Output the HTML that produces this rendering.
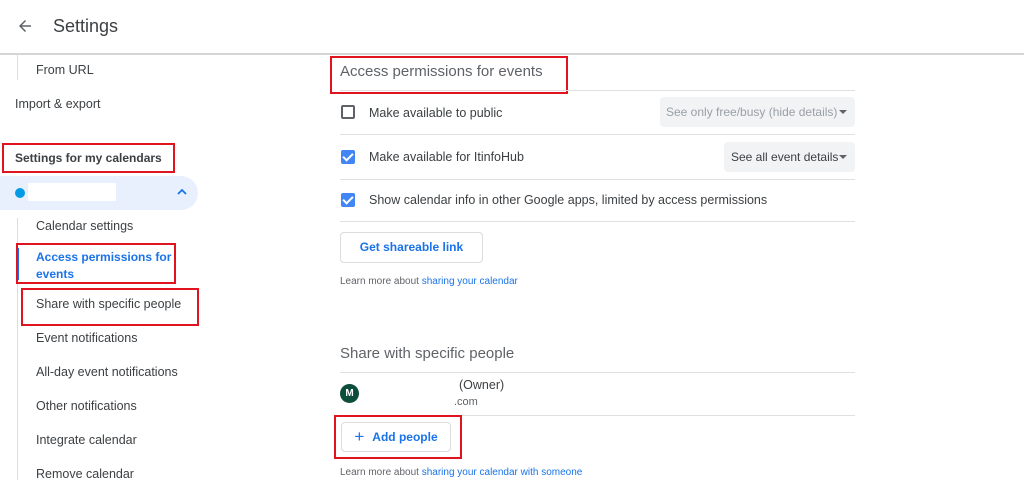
<!DOCTYPE html>
<html><head><style>
body{margin:0;width:1024px;height:497px;background:#fff;font-family:"Liberation Sans",Arial,sans-serif;position:relative;overflow:hidden;color:#3c4043}
.a{position:absolute;white-space:nowrap}
.t{font-size:12.5px;color:#3c4043}
.red{position:absolute;border:2px solid #e0141e;box-sizing:border-box}
.hr{position:absolute;left:340px;width:515px;height:1px;background:#e0e0e0}
.cb{position:absolute;left:341px;width:14px;height:14px;border-radius:2px;box-sizing:border-box}
.on{background:#4285f4}
.on:after{content:"";position:absolute;left:4px;top:1px;width:4px;height:8px;border:solid #fff;border-width:0 2px 2px 0;transform:rotate(45deg)}
.off{border:2px solid #5f6368}
.dd{position:absolute;background:#f1f3f4;border-radius:4px;font-size:12px}
.dd:after{content:"";position:absolute;right:8px;top:13px;border:4px solid transparent;border-top-color:#5f6368;border-bottom:0}
.btn{position:absolute;border:1px solid #dadce0;border-radius:4px;color:#1a73e8;font-size:12px;font-weight:bold;box-sizing:border-box;text-align:center}
.lm{font-size:10px;color:#5f6368}
.lm span{color:#1a73e8}
</style></head><body>
<svg class="a" style="left:16px;top:17px" width="18" height="18" viewBox="0 0 24 24"><path d="M20 11H7.8l5.6-5.6L12 4l-8 8 8 8 1.4-1.4L7.8 13H20z" fill="#5f6368"/></svg>
<div class="a" style="left:53px;top:16px;font-size:18px;color:#3c4043">Settings</div>
<div class="a" style="left:0;top:53px;width:1024px;height:2px;background:#d5d5d5"></div>
<div class="a" style="left:17px;top:55px;width:1px;height:25px;background:#ddd"></div>
<div class="a" style="left:17px;top:218px;width:1px;height:262px;background:#ddd"></div>
<div class="a" style="left:17px;top:248px;width:2px;height:32px;background:#1a73e8"></div>
<div class="a t" style="left:36px;top:63px">From URL</div>
<div class="a t" style="left:15px;top:97px">Import &amp; export</div>
<div class="a" style="left:15px;top:151px;font-size:12px;font-weight:bold;color:#3c4043">Settings for my calendars</div>
<div class="red" style="left:2px;top:143px;width:173px;height:30px"></div>
<div class="a" style="left:0;top:176px;width:198px;height:34px;background:#e8f0fe;border-radius:0 17px 17px 0"></div>
<div class="a" style="left:15px;top:188px;width:10px;height:10px;border-radius:50%;background:#039be5"></div>
<div class="a" style="left:28px;top:183px;width:88px;height:18px;background:#fff"></div>
<svg class="a" style="left:176px;top:187px" width="12" height="10" viewBox="0 0 12 10"><path d="M2 7l4-4 4 4" fill="none" stroke="#1a73e8" stroke-width="1.8"/></svg>
<div class="a t" style="left:36px;top:219px">Calendar settings</div>
<div class="a" style="left:36px;top:249px;font-size:12px;color:#1a73e8;font-weight:bold;line-height:17px;white-space:normal;width:145px">Access permissions for events</div>
<div class="red" style="left:16px;top:243px;width:160px;height:41px"></div>
<div class="a t" style="left:36px;top:297px">Share with specific people</div>
<div class="red" style="left:21px;top:288px;width:178px;height:38px"></div>
<div class="a t" style="left:36px;top:331px">Event notifications</div>
<div class="a t" style="left:36px;top:365px">All-day event notifications</div>
<div class="a t" style="left:36px;top:399px">Other notifications</div>
<div class="a t" style="left:36px;top:433px">Integrate calendar</div>
<div class="a t" style="left:36px;top:467px">Remove calendar</div>

<div class="a" style="left:340px;top:63px;font-size:15px;color:#5f6368">Access permissions for events</div>
<div class="red" style="left:330px;top:56px;width:238px;height:38px"></div>
<div class="hr" style="top:90px"></div>
<div class="cb off" style="top:105px"></div>
<div class="a t" style="left:369px;top:106px">Make available to public</div>
<div class="dd" style="left:660px;top:97px;width:195px;height:30px"><span class="a" style="left:6px;top:8px;color:#9aa0a6">See only free/busy (hide details)</span></div>
<div class="hr" style="top:134px"></div>
<div class="cb on" style="top:150px"></div>
<div class="a t" style="left:369px;top:150px">Make available for ItinfoHub</div>
<div class="dd" style="left:724px;top:142px;width:131px;height:30px"><span class="a" style="left:7px;top:8px;color:#3c4043">See all event details</span></div>
<div class="hr" style="top:179px"></div>
<div class="cb on" style="top:193px"></div>
<div class="a t" style="left:369px;top:193px">Show calendar info in other Google apps, limited by access permissions</div>
<div class="hr" style="top:221px"></div>
<div class="btn" style="left:340px;top:232px;width:143px;height:31px;line-height:29px">Get shareable link</div>
<div class="a lm" style="left:340px;top:276px">Learn more about <span>sharing your calendar</span></div>

<div class="a" style="left:340px;top:345px;font-size:15px;color:#5f6368">Share with specific people</div>
<div class="hr" style="top:372px"></div>
<div class="a" style="left:340px;top:384px;width:19px;height:19px;border-radius:50%;background:#0d4d3b;color:#fff;font-size:10px;font-weight:bold;text-align:center;line-height:19px">M</div>
<div class="a t" style="left:459px;top:378px">(Owner)</div>
<div class="a" style="left:454px;top:396px;font-size:11px;color:#5f6368">.com</div>
<div class="hr" style="top:415px"></div>
<div class="btn" style="left:341px;top:422px;width:110px;height:30px;line-height:28px"><span style="font-size:17px;font-weight:normal;vertical-align:-1px;margin-right:8px">+</span>Add people</div>
<div class="red" style="left:334px;top:415px;width:128px;height:44px"></div>
<div class="a lm" style="left:340px;top:467px">Learn more about <span>sharing your calendar with someone</span></div>
</body></html>
